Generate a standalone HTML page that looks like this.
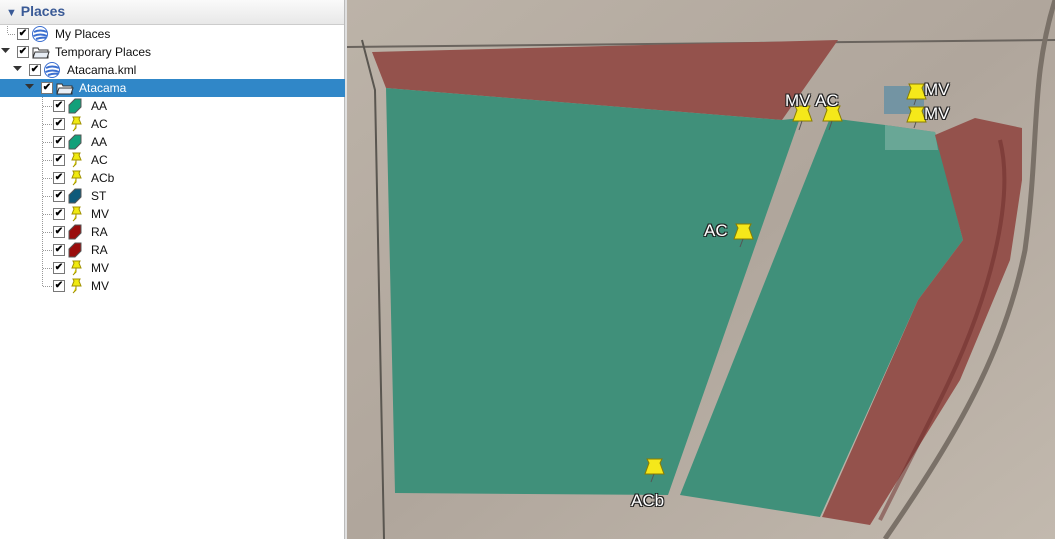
<!DOCTYPE html>
<html><head><meta charset="utf-8"><style>
*{margin:0;padding:0;box-sizing:border-box}
body{width:1055px;height:539px;overflow:hidden;background:#fff;font-family:"Liberation Sans",sans-serif;position:relative}
#left{position:absolute;left:0;top:0;width:345px;height:539px;background:#fff;border-right:1px solid #bbb}
#hdr{height:25px;background:linear-gradient(#fafafa,#e8e8e8);border-bottom:1px solid #ccc;color:#3a5a96;font-weight:bold;font-size:14px;padding:3px 0 0 6px}
.row{position:absolute;height:18px;font-size:12px;color:#111;line-height:18px;white-space:nowrap}
.cb{position:absolute;top:3px;width:12px;height:12px;border:1px solid #777;background:#fff;font-size:10px;line-height:10px;text-align:center;font-weight:bold;color:#000}
.tx{position:absolute;top:0}
.ic{position:absolute;top:1px}
#map{position:absolute;left:347px;top:0;width:708px;height:539px}
.lbl{position:absolute;font-size:17px;color:#fff;text-shadow:-1px -1px 0 #222,1px -1px 0 #222,-1px 1px 0 #222,1px 1px 0 #222}
</style></head><body>
<div id="left">
<div id="hdr"><span style="font-size:11px">▼</span> Places</div>
<div style="position:absolute;left:0;top:79px;width:345px;height:18px;background:#3087c8"></div>
<svg width="345" height="300" style="position:absolute;left:0;top:0">
<g stroke="#999" stroke-dasharray="1,1" fill="none">
<line x1="7.5" y1="26" x2="7.5" y2="34"/><line x1="8" y1="34.5" x2="16" y2="34.5"/>
<line x1="42.5" y1="97" x2="42.5" y2="287"/>
<line x1="43" y1="106.5" x2="52" y2="106.5"/><line x1="43" y1="124.5" x2="52" y2="124.5"/><line x1="43" y1="142.5" x2="52" y2="142.5"/><line x1="43" y1="160.5" x2="52" y2="160.5"/><line x1="43" y1="178.5" x2="52" y2="178.5"/><line x1="43" y1="196.5" x2="52" y2="196.5"/><line x1="43" y1="214.5" x2="52" y2="214.5"/><line x1="43" y1="232.5" x2="52" y2="232.5"/><line x1="43" y1="250.5" x2="52" y2="250.5"/><line x1="43" y1="268.5" x2="52" y2="268.5"/><line x1="43" y1="286.5" x2="52" y2="286.5"/>
</g>
<path d="M1 48h9l-4.5 5z" fill="#333"/>
<path d="M13 66h9l-4.5 5z" fill="#333"/>
<path d="M25 84h9l-4.5 5z" fill="#333"/>
</svg>
<div class="row" style="left:17px;top:25px"><div class="cb" style="left:0">✔</div><svg class="ic" style="left:15px" width="17" height="16"><circle cx="8" cy="8" r="7.5" fill="#fff" stroke="#3b6fd0"/><path d="M2 6q6 -3 13 0M1.5 10q7 -3 13.5 0M4 13q6 -2 10 -1" stroke="#3b6fd0" stroke-width="2" fill="none"/></svg><span class="tx" style="left:38px">My Places</span></div>
<div class="row" style="left:17px;top:43px"><div class="cb" style="left:0">✔</div><svg class="ic" style="left:15px" width="18" height="16"><path d="M1 4h5l1 2h9v8H1z" fill="#fff" stroke="#333"/><path d="M3 8h14l-2 6H1z" fill="#e8eef5" stroke="#333"/></svg><span class="tx" style="left:38px">Temporary Places</span></div>
<div class="row" style="left:29px;top:61px"><div class="cb" style="left:0">✔</div><svg class="ic" style="left:15px" width="17" height="16"><circle cx="8" cy="8" r="7.5" fill="#fff" stroke="#3b6fd0"/><path d="M2 6q6 -3 13 0M1.5 10q7 -3 13.5 0M4 13q6 -2 10 -1" stroke="#3b6fd0" stroke-width="2" fill="none"/></svg><span class="tx" style="left:38px">Atacama.kml</span></div>
<div class="row" style="left:41px;top:79px;color:#fff"><div class="cb" style="left:0">✔</div><svg class="ic" style="left:15px" width="18" height="16"><path d="M1 4h5l1 2h9v8H1z" fill="#fff" stroke="#333"/><path d="M3 8h14l-2 6H1z" fill="#e8eef5" stroke="#333"/></svg><span class="tx" style="left:38px">Atacama</span></div>
<div class="row" style="left:53px;top:97px"><div class="cb">✔</div><svg class="ic" style="left:15px" width="14" height="16"><path d="M1 15V7l6-6h6v8l-6 6z" fill="#12a07a" stroke="#555"/></svg><span class="tx" style="left:38px">AA</span></div>
<div class="row" style="left:53px;top:115px"><div class="cb">✔</div><svg class="ic" style="left:16px" width="14" height="16"><path d="M4 1h7l-1 2 2 5H3l2-5zM7 8v4l-3 3" fill="#f0ea10" stroke="#a09000"/></svg><span class="tx" style="left:38px">AC</span></div>
<div class="row" style="left:53px;top:133px"><div class="cb">✔</div><svg class="ic" style="left:15px" width="14" height="16"><path d="M1 15V7l6-6h6v8l-6 6z" fill="#12a07a" stroke="#555"/></svg><span class="tx" style="left:38px">AA</span></div>
<div class="row" style="left:53px;top:151px"><div class="cb">✔</div><svg class="ic" style="left:16px" width="14" height="16"><path d="M4 1h7l-1 2 2 5H3l2-5zM7 8v4l-3 3" fill="#f0ea10" stroke="#a09000"/></svg><span class="tx" style="left:38px">AC</span></div>
<div class="row" style="left:53px;top:169px"><div class="cb">✔</div><svg class="ic" style="left:16px" width="14" height="16"><path d="M4 1h7l-1 2 2 5H3l2-5zM7 8v4l-3 3" fill="#f0ea10" stroke="#a09000"/></svg><span class="tx" style="left:38px">ACb</span></div>
<div class="row" style="left:53px;top:187px"><div class="cb">✔</div><svg class="ic" style="left:15px" width="14" height="16"><path d="M1 15V7l6-6h6v8l-6 6z" fill="#0e5a7a" stroke="#555"/></svg><span class="tx" style="left:38px">ST</span></div>
<div class="row" style="left:53px;top:205px"><div class="cb">✔</div><svg class="ic" style="left:16px" width="14" height="16"><path d="M4 1h7l-1 2 2 5H3l2-5zM7 8v4l-3 3" fill="#f0ea10" stroke="#a09000"/></svg><span class="tx" style="left:38px">MV</span></div>
<div class="row" style="left:53px;top:223px"><div class="cb">✔</div><svg class="ic" style="left:15px" width="14" height="16"><path d="M1 15V7l6-6h6v8l-6 6z" fill="#9a0c0c" stroke="#555"/></svg><span class="tx" style="left:38px">RA</span></div>
<div class="row" style="left:53px;top:241px"><div class="cb">✔</div><svg class="ic" style="left:15px" width="14" height="16"><path d="M1 15V7l6-6h6v8l-6 6z" fill="#9a0c0c" stroke="#555"/></svg><span class="tx" style="left:38px">RA</span></div>
<div class="row" style="left:53px;top:259px"><div class="cb">✔</div><svg class="ic" style="left:16px" width="14" height="16"><path d="M4 1h7l-1 2 2 5H3l2-5zM7 8v4l-3 3" fill="#f0ea10" stroke="#a09000"/></svg><span class="tx" style="left:38px">MV</span></div>
<div class="row" style="left:53px;top:277px"><div class="cb">✔</div><svg class="ic" style="left:16px" width="14" height="16"><path d="M4 1h7l-1 2 2 5H3l2-5zM7 8v4l-3 3" fill="#f0ea10" stroke="#a09000"/></svg><span class="tx" style="left:38px">MV</span></div>
</div>
<div style="position:absolute;left:345px;top:0;width:3px;height:539px;background:#e0e0e0"></div>
<svg id="map" width="708" height="539" viewBox="347 0 708 539">
<defs><linearGradient id="bg" x1="0" y1="0" x2="1" y2="1"><stop offset="0" stop-color="#bcb3a8"/><stop offset="0.5" stop-color="#b0a69c"/><stop offset="1" stop-color="#c2b9ae"/></linearGradient></defs>
<rect x="347" y="0" width="708" height="539" fill="url(#bg)"/>
<path d="M347 47L1055 40" stroke="#6a645e" stroke-width="2"/>
<path d="M362 40L375 90L384 539" stroke="#5a5650" stroke-width="2" fill="none"/>
<path d="M1055 0C1030 80 1040 140 1025 250C1005 350 960 430 885 539" stroke="#7a7168" stroke-width="5" fill="none"/>
<path d="M372 52L838 40L782 120L386 88Z" fill="#94524c"/>
<path d="M386 88L782 120L800 118L668 495L395 493Z" fill="#40907a"/>
<path d="M830 118L885 125L935 132L963 240L918 300L820 517L680 495Z" fill="#40907a"/>
<path d="M885 125L935 132L938 150L885 150Z" fill="#7ab0a2" opacity="0.7"/>
<rect x="884" y="86" width="40" height="28" fill="#6890a5" opacity="0.85"/>
<path d="M935 135L975 118L1022 128L1022 180L1010 260L960 380L870 525L822 517L918 300L963 240Z" fill="#94524c"/>
<path d="M1000 140C1015 200 990 300 940 400L880 520" stroke="#6a2a28" stroke-width="4" fill="none" opacity="0.5"/>
<g fill="#f5e81a" stroke="#8a7d00" stroke-width="1">
<path d="M795 106h15l-2 4 4 11h-19l4-11z"/><path d="M825 106h15l-2 4 4 11h-19l4-11z"/>
<path d="M909 84h15l-2 4 4 11h-19l4-11z"/><path d="M909 107h15l-2 4 4 11h-19l4-11z"/>
<path d="M736 224h15l-2 4 4 11h-19l4-11z"/><path d="M647 459h15l-2 4 4 11h-19l4-11z"/>
</g>
<g stroke="#555" stroke-width="1"><path d="M802 121l-3 9M832 121l-3 9M916 99l-2 6M916 122l-2 6M743 239l-3 8M654 474l-3 8"/></g>
</svg>
<div class="lbl" style="left:785px;top:91px">MV</div>
<div class="lbl" style="left:815px;top:91px">AC</div>
<div class="lbl" style="left:924px;top:80px">MV</div>
<div class="lbl" style="left:924px;top:104px">MV</div>
<div class="lbl" style="left:704px;top:221px">AC</div>
<div class="lbl" style="left:631px;top:491px">ACb</div>
</body></html>
